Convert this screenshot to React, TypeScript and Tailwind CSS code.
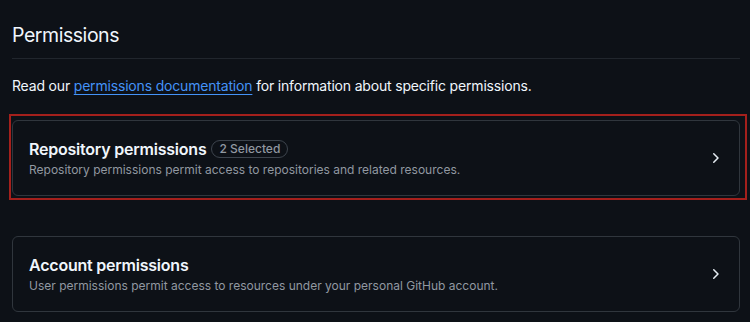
import React from "react";

function Chevron() {
  return (
    <svg width="16" height="16" viewBox="0 0 16 16" fill="#e6edf3" aria-hidden="true">
      <path d="M6.22 3.22a.75.75 0 0 1 1.06 0l4.25 4.25a.75.75 0 0 1 0 1.06l-4.25 4.25a.751.751 0 0 1-1.042-.018.751.751 0 0 1-.018-1.042L9.94 8 6.22 4.28a.75.75 0 0 1 0-1.06Z" />
    </svg>
  );
}

function PermCard({ title, badge, desc }: { title: string; badge?: string; desc: string }) {
  return (
    <div className="flex items-center justify-between rounded-[6px] border border-[#30363d] px-4 py-4">
      <div className="flex flex-col">
        <div className="flex items-center gap-[5px]">
          <span className="text-[16px] leading-[24px] font-semibold tracking-[-0.22px] text-[#f0f6fc]">{title}</span>
          {badge && (
            <span className="rounded-full border border-[#3d444d] px-[7px] text-[12px] leading-[16px] font-medium text-[#9198a1]">
              {badge}
            </span>
          )}
        </div>
        <div className="text-[12px] leading-[18px] text-[#9198a1]">{desc}</div>
      </div>
      <Chevron />
    </div>
  );
}

export default function App() {
  return (
    <div
      className="min-h-[322px] w-[750px] bg-[#0d1117] pl-3 pr-[10px]"
      style={{ fontFamily: 'Inter, "Liberation Sans", Arial, sans-serif' }}
    >
      <div className="border-b border-[#21262d] pt-[20px] pb-[8px]">
        <h2 className="text-[19.5px] leading-[30px] font-normal tracking-[-0.45px] text-[#f0f6fc]">Permissions</h2>
      </div>
      <p className="mt-4 text-[14px] leading-[21px] tracking-[-0.18px] text-[#f0f6fc]">
        Read our{" "}
        <a href="#" className="text-[#4493f8] underline underline-offset-[3px]">
          permissions documentation
        </a>{" "}
        for information about specific permissions.
      </p>
      <div className="relative mt-6">
        <PermCard
          title="Repository permissions"
          badge="2 Selected"
          desc="Repository permissions permit access to repositories and related resources."
        />
        <div className="pointer-events-none absolute -top-[6px] -left-[3px] -right-[7px] -bottom-[4px] border-2 border-[#a4201c]" />
      </div>
      <div className="mt-10">
        <PermCard
          title="Account permissions"
          desc="User permissions permit access to resources under your personal GitHub account."
        />
      </div>
    </div>
  );
}
